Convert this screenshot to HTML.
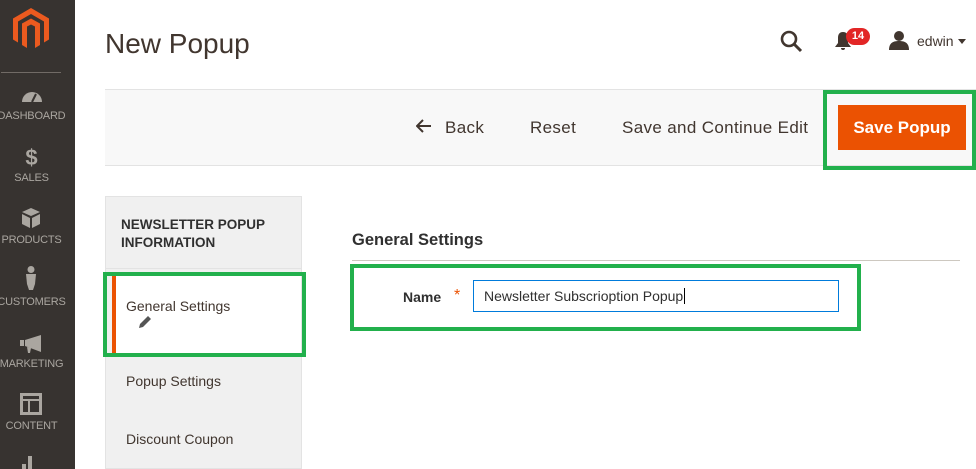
<!DOCTYPE html>
<html><head><style>
*{margin:0;padding:0;box-sizing:border-box}
body{width:976px;height:469px;overflow:hidden;background:#fff;font-family:"Liberation Sans",sans-serif;color:#303030;position:relative}
.abs{position:absolute}
#side{left:0;top:0;width:75px;height:469px;background:#373330}
.mi{position:absolute;left:0;width:75px;text-align:center;color:#aaa6a0;font-size:11px;letter-spacing:-0.2px}
.ic{position:absolute;left:0;width:75px;text-align:center;color:#aaa6a0}
.gb{position:absolute;border:4px solid #22b04c}
.tb{position:absolute;top:118px;font-size:17px;color:#41362f;letter-spacing:0.35px}
</style></head><body>
<div id="side" class="abs">
<svg class="abs" style="left:13px;top:8px" width="36" height="42" viewBox="0 0 36 42"><path d="M18 0L36 10.5V31.5L31 34.5V13.5L18 6 5 13.5V34.5L0 31.5V10.5Z M9 15.5L18 10.5 27 15.5V37L22 40V18.5L18 16.5 14 18.5V40L9 37Z" fill="#eb5a1f"/></svg>
<div class="abs" style="left:1px;top:72px;width:60px;height:1px;background:#716b66"></div>
<svg class="abs" style="left:21px;top:89px" width="22" height="14" viewBox="0 0 22 14"><path d="M1 13A10 10 0 0 1 21 13Z" fill="#aaa6a0"/><path d="M11 13L15 5" stroke="#373330" stroke-width="2"/></svg>
<div class="mi" style="top:110px;left:-6px">DASHBOARD</div>
<div class="ic" style="top:145px;font-size:22px;font-weight:bold;left:-6px">$</div>
<div class="mi" style="top:172px;left:-6px">SALES</div>
<svg class="abs" style="left:22px;top:208px" width="18" height="20" viewBox="0 0 18 20"><path d="M9 0L18 4 9 8 0 4Z M0 6L8 10V20L0 16Z M10 10L18 6V16L10 20Z" fill="#aaa6a0"/></svg>
<div class="mi" style="top:234px;left:-6px">PRODUCTS</div>
<svg class="abs" style="left:25px;top:266px" width="12" height="24" viewBox="0 0 12 24"><circle cx="6" cy="3.5" r="3.5" fill="#aaa6a0"/><path d="M1 8H11L10 18 8 24H4L2 18Z" fill="#aaa6a0"/></svg>
<div class="mi" style="top:296px;left:-6px">CUSTOMERS</div>
<svg class="abs" style="left:20px;top:335px" width="22" height="18" viewBox="0 0 22 18"><path d="M0 5H4V11H0Z M5 5L21 0V17L5 11Z M7 12L11 13 10 18 8 18Z" fill="#aaa6a0"/></svg>
<div class="mi" style="top:358px;left:-6px">MARKETING</div>
<svg class="abs" style="left:20px;top:393px" width="22" height="22" viewBox="0 0 22 22"><path d="M0 0H22V22H0Z M3 3V6H19V3Z M3 8V19H8V8Z M10 8V19H19V8Z" fill="#aaa6a0" fill-rule="evenodd"/></svg>
<div class="mi" style="top:420px;left:-6px">CONTENT</div>
<svg class="abs" style="left:22px;top:456px" width="16" height="13" viewBox="0 0 16 13"><path d="M0 8H4V13H0Z M6 0H10V13H6Z" fill="#aaa6a0"/></svg>
</div>

<div class="abs" style="left:105px;top:28px;font-size:28px;color:#41362f">New Popup</div>
<svg class="abs" style="left:779px;top:29px" width="24" height="24" viewBox="0 0 24 24"><circle cx="10" cy="10" r="7" fill="none" stroke="#41362f" stroke-width="2.6"/><path d="M15 15L22 22" stroke="#41362f" stroke-width="3"/></svg>
<svg class="abs" style="left:834px;top:31px" width="18" height="20" viewBox="0 0 18 20"><path d="M9 1C5 1 4 4 4 7V12L1 16H17L14 12V7C14 4 13 1 9 1Z M7 17H11A2 2 0 0 1 7 17Z" fill="#41362f"/></svg>
<div class="abs" style="left:846px;top:28px;width:24px;height:17px;border-radius:9px;background:#e22626;color:#fff;font-size:11px;font-weight:bold;text-align:center;line-height:17px">14</div>
<svg class="abs" style="left:889px;top:30px" width="20" height="20" viewBox="0 0 20 20"><circle cx="10" cy="6" r="5" fill="#41362f"/><path d="M0 20C0 13 4 11 10 11S20 13 20 20Z" fill="#41362f"/></svg>
<div class="abs" style="left:917px;top:33px;font-size:14px;color:#41362f">edwin</div>
<div class="abs" style="left:958px;top:39px;border:4px solid transparent;border-top:5px solid #41362f"></div>

<div class="abs" style="left:105px;top:89px;width:871px;height:77px;background:#f8f8f8;border-top:1px solid #e3e3e3;border-bottom:1px solid #e3e3e3"></div>
<svg class="abs" style="left:416px;top:119px" width="16" height="14" viewBox="0 0 16 14"><path d="M15 7H2M7 1L1 7 7 13" fill="none" stroke="#41362f" stroke-width="2"/></svg>
<div class="tb" style="left:445px">Back</div>
<div class="tb" style="left:530px">Reset</div>
<div class="tb" style="left:622px">Save and Continue Edit</div>
<div class="abs" style="left:838px;top:105px;width:128px;height:45px;background:#eb5202;color:#fff;font-size:17px;font-weight:bold;text-align:center;line-height:45px">Save Popup</div>
<div class="gb" style="left:823px;top:90px;width:153px;height:80px"></div>

<div class="abs" style="left:105px;top:196px;width:197px;height:273px;background:#f0f0f0;border:1px solid #e3e3e3"></div>
<div class="abs" style="left:121px;top:216px;font-size:13.5px;font-weight:bold;line-height:18px;color:#303030">NEWSLETTER POPUP<br>INFORMATION</div>
<div class="abs" style="left:106px;top:268px;width:195px;height:1px;background:#e3e3e3"></div>
<div class="abs" style="left:112px;top:276px;width:189px;height:77px;background:#fff;border-left:4px solid #eb5202"></div>
<div class="abs" style="left:126px;top:298px;font-size:14px;color:#41362f">General Settings</div>
<svg class="abs" style="left:137px;top:314px" width="16" height="16" viewBox="0 0 16 16"><path d="M2 14L3 10 11 2 14 5 6 13Z" fill="#555"/></svg>
<div class="gb" style="left:103px;top:272px;width:203px;height:85px"></div>
<div class="abs" style="left:126px;top:373px;font-size:14px;color:#41362f">Popup Settings</div>
<div class="abs" style="left:126px;top:431px;font-size:14px;color:#41362f">Discount Coupon</div>

<div class="abs" style="left:352px;top:231px;font-size:16.5px;font-weight:bold;color:#303030">General Settings</div>
<div class="abs" style="left:352px;top:260px;width:608px;height:1px;background:#cdc8c0"></div>
<div class="gb" style="left:350px;top:264px;width:511px;height:67px"></div>
<div class="abs" style="left:403px;top:289px;font-size:14px;font-weight:bold;color:#303030">Name</div>
<div class="abs" style="left:454px;top:287px;font-size:16px;color:#eb5202">*</div>
<div class="abs" style="left:473px;top:280px;width:366px;height:32px;border:1px solid #007bdb;font-size:14px;padding:7px 10px;color:#303030">Newsletter Subscrioption Popup<span style="border-left:1px solid #000;margin-left:1px"></span></div>
</body></html>
